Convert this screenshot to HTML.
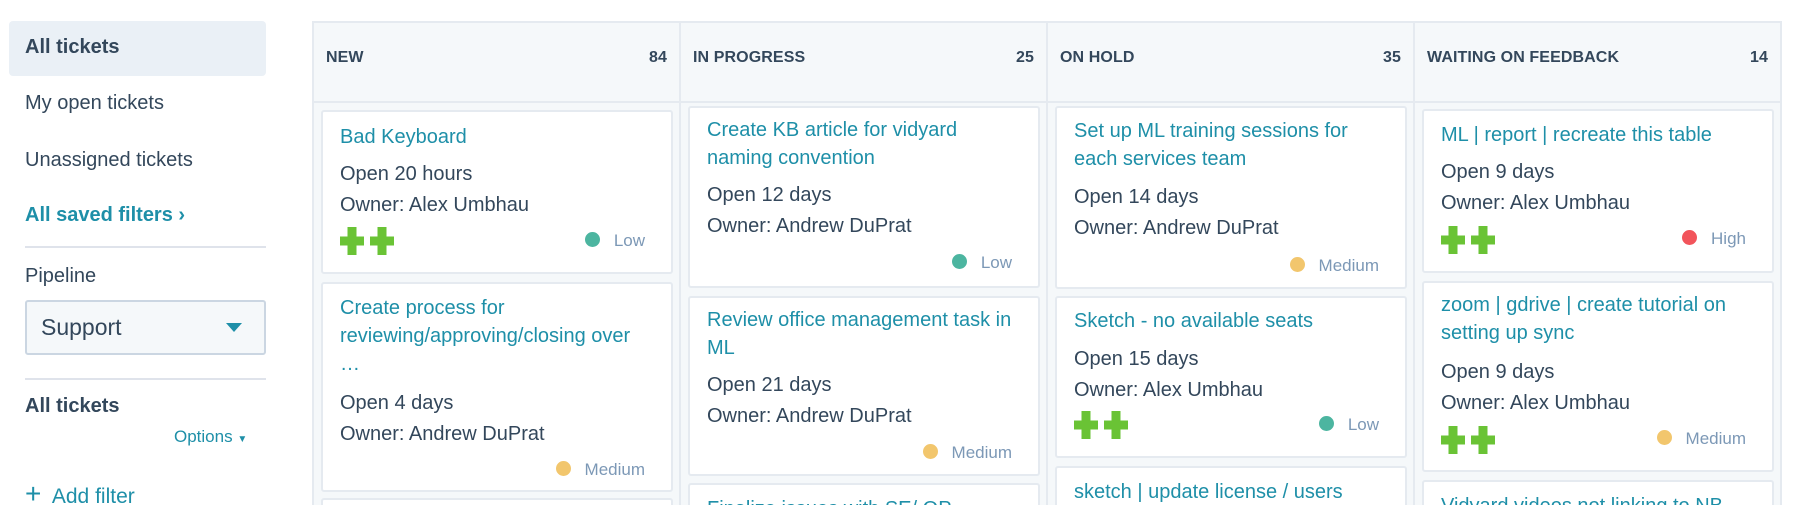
<!DOCTYPE html>
<html><head><meta charset="utf-8"><style>
*{margin:0;padding:0;box-sizing:border-box}
html,body{width:1800px;height:505px;overflow:hidden}
body{background:#fff;font-family:"Liberation Sans",sans-serif;color:#33475b;position:relative}
.a{position:absolute;white-space:nowrap}
.side{font-size:20px}
.board{position:absolute;left:312px;top:21px;width:1500px;height:484px;background:#f5f8fa;border-top:2px solid #e5eaf0;border-left:2px solid #e5eaf0;overflow:hidden}
.col{position:absolute;top:0;height:484px;width:367px;border-right:2px solid #e5eaf0;overflow:hidden}
.hd{position:absolute;left:0;right:0;top:0;height:80px;border-bottom:2px solid #e5eaf0;font-size:16px;font-weight:bold;letter-spacing:.1px}
.hd .l{position:absolute;left:12px;top:26px}
.hd .c{position:absolute;right:12px;top:26px}
.card{position:absolute;left:7px;width:352px;background:#fff;border:2px solid #e5eaf0;border-radius:3px;overflow:hidden}
.t{position:absolute;left:17px;color:#1e8fa8;font-size:20px;line-height:28px}
.b{position:absolute;left:17px;font-size:20px;line-height:31px}
.p{position:absolute;right:26px;font-size:17px;color:#7c98b6}
.p i{display:inline-block;width:15px;height:15px;border-radius:50%;margin-right:14px;vertical-align:-1px}
.pl{position:absolute;left:17px}
</style></head><body>
<div class="a" style="left:9px;top:21px;width:257px;height:55px;background:#eaf0f6;border-radius:4px"></div>
<div class="a side" style="left:25px;top:36px;font-weight:bold">All tickets</div>
<div class="a side" style="left:25px;top:92px">My open tickets</div>
<div class="a side" style="left:25px;top:149px">Unassigned tickets</div>
<div class="a side" style="left:25px;top:204px;color:#1e8fa8;font-weight:bold">All saved filters ›</div>
<div class="a" style="left:25px;top:246px;width:241px;height:2px;background:#dfe3eb"></div>
<div class="a side" style="left:25px;top:265px">Pipeline</div>
<div class="a" style="left:25px;top:300px;width:241px;height:55px;background:#f5f8fa;border:2px solid #cbd6e2;border-radius:3px"></div>
<div class="a" style="left:41px;top:314px;font-size:23px">Support</div>
<div class="a" style="left:226px;top:323px;width:0;height:0;border-left:8px solid transparent;border-right:8px solid transparent;border-top:9px solid #1e8fa8"></div>
<div class="a" style="left:25px;top:378px;width:241px;height:2px;background:#dfe3eb"></div>
<div class="a side" style="left:25px;top:395px;font-weight:bold">All tickets</div>
<div class="a" style="left:174px;top:427px;font-size:17px;color:#1e8fa8">Options <span style="font-size:10px">▼</span></div>
<div class="a" style="left:25px;top:482px;font-size:21px;line-height:23px;color:#1e8fa8"><span style="font-size:28px;line-height:23px;font-weight:300">+</span>&nbsp; Add filter</div>

<svg width="0" height="0" style="position:absolute"><defs><g id="pp"><path d="M12 1v28M0 15h24M42 1v28M30 15h24" stroke="#6ac335" stroke-width="9"/></g></defs></svg>

<div class="board">
<div class="col" style="left:0">
 <div class="hd"><span class="l">NEW</span><span class="c">84</span></div>
 <div class="card" style="top:87px;height:164px">
  <div class="t" style="top:11px">Bad Keyboard</div>
  <div class="b" style="top:47px">Open 20 hours<br>Owner: Alex Umbhau</div>
  <svg class="pl" style="top:114px" width="56" height="30"><use href="#pp"/></svg>
  <div class="p" style="top:119px"><i style="background:#4cb5a0"></i>Low</div>
 </div>
 <div class="card" style="top:259px;height:210px">
  <div class="t" style="top:10px">Create process for<br>reviewing/approving/closing over<br>…</div>
  <div class="b" style="top:104px">Open 4 days<br>Owner: Andrew DuPrat</div>
  <div class="p" style="top:176px"><i style="background:#f2c66d"></i>Medium</div>
 </div>
 <div class="card" style="top:475px;height:60px"></div>
</div>
<div class="col" style="left:367px">
 <div class="hd"><span class="l">IN PROGRESS</span><span class="c">25</span></div>
 <div class="card" style="top:83px;height:182px">
  <div class="t" style="top:8px">Create KB article for vidyard<br>naming convention</div>
  <div class="b" style="top:72px">Open 12 days<br>Owner: Andrew DuPrat</div>
  <div class="p" style="top:145px"><i style="background:#4cb5a0"></i>Low</div>
 </div>
 <div class="card" style="top:273px;height:180px">
  <div class="t" style="top:8px">Review office management task in<br>ML</div>
  <div class="b" style="top:72px">Open 21 days<br>Owner: Andrew DuPrat</div>
  <div class="p" style="top:145px"><i style="background:#f2c66d"></i>Medium</div>
 </div>
 <div class="card" style="top:460px;height:60px"><div class="t" style="top:10px">Finalize issues with SE/ OP</div></div>
</div>
<div class="col" style="left:734px">
 <div class="hd"><span class="l">ON HOLD</span><span class="c">35</span></div>
 <div class="card" style="top:83px;height:183px">
  <div class="t" style="top:9px">Set up ML training sessions for<br>each services team</div>
  <div class="b" style="top:74px">Open 14 days<br>Owner: Andrew DuPrat</div>
  <div class="p" style="top:148px"><i style="background:#f2c66d"></i>Medium</div>
 </div>
 <div class="card" style="top:273px;height:162px">
  <div class="t" style="top:9px">Sketch - no available seats</div>
  <div class="b" style="top:46px">Open 15 days<br>Owner: Alex Umbhau</div>
  <svg class="pl" style="top:112px" width="56" height="30"><use href="#pp"/></svg>
  <div class="p" style="top:117px"><i style="background:#4cb5a0"></i>Low</div>
 </div>
 <div class="card" style="top:443px;height:70px"><div class="t" style="top:10px">sketch | update license / users</div></div>
</div>
<div class="col" style="left:1101px">
 <div class="hd"><span class="l">WAITING ON FEEDBACK</span><span class="c">14</span></div>
 <div class="card" style="top:86px;height:164px">
  <div class="t" style="top:10px">ML | report | recreate this table</div>
  <div class="b" style="top:46px">Open 9 days<br>Owner: Alex Umbhau</div>
  <svg class="pl" style="top:114px" width="56" height="30"><use href="#pp"/></svg>
  <div class="p" style="top:118px"><i style="background:#f2545b"></i>High</div>
 </div>
 <div class="card" style="top:258px;height:191px">
  <div class="t" style="top:8px">zoom | gdrive | create tutorial on<br>setting up sync</div>
  <div class="b" style="top:74px">Open 9 days<br>Owner: Alex Umbhau</div>
  <svg class="pl" style="top:142px" width="56" height="30"><use href="#pp"/></svg>
  <div class="p" style="top:146px"><i style="background:#f2c66d"></i>Medium</div>
 </div>
 <div class="card" style="top:457px;height:60px"><div class="t" style="top:10px">Vidyard videos not linking to NB</div></div>
</div>
<div class="col" style="left:1468px;border-right:none">
 <div class="hd"></div>
 <div class="card" style="top:86px;height:180px"></div>
 <div class="card" style="top:278px;height:180px"></div>
</div>
</div>
<div class="a" style="left:1782px;top:0;width:18px;height:505px;background:#fff"></div>
</body></html>
